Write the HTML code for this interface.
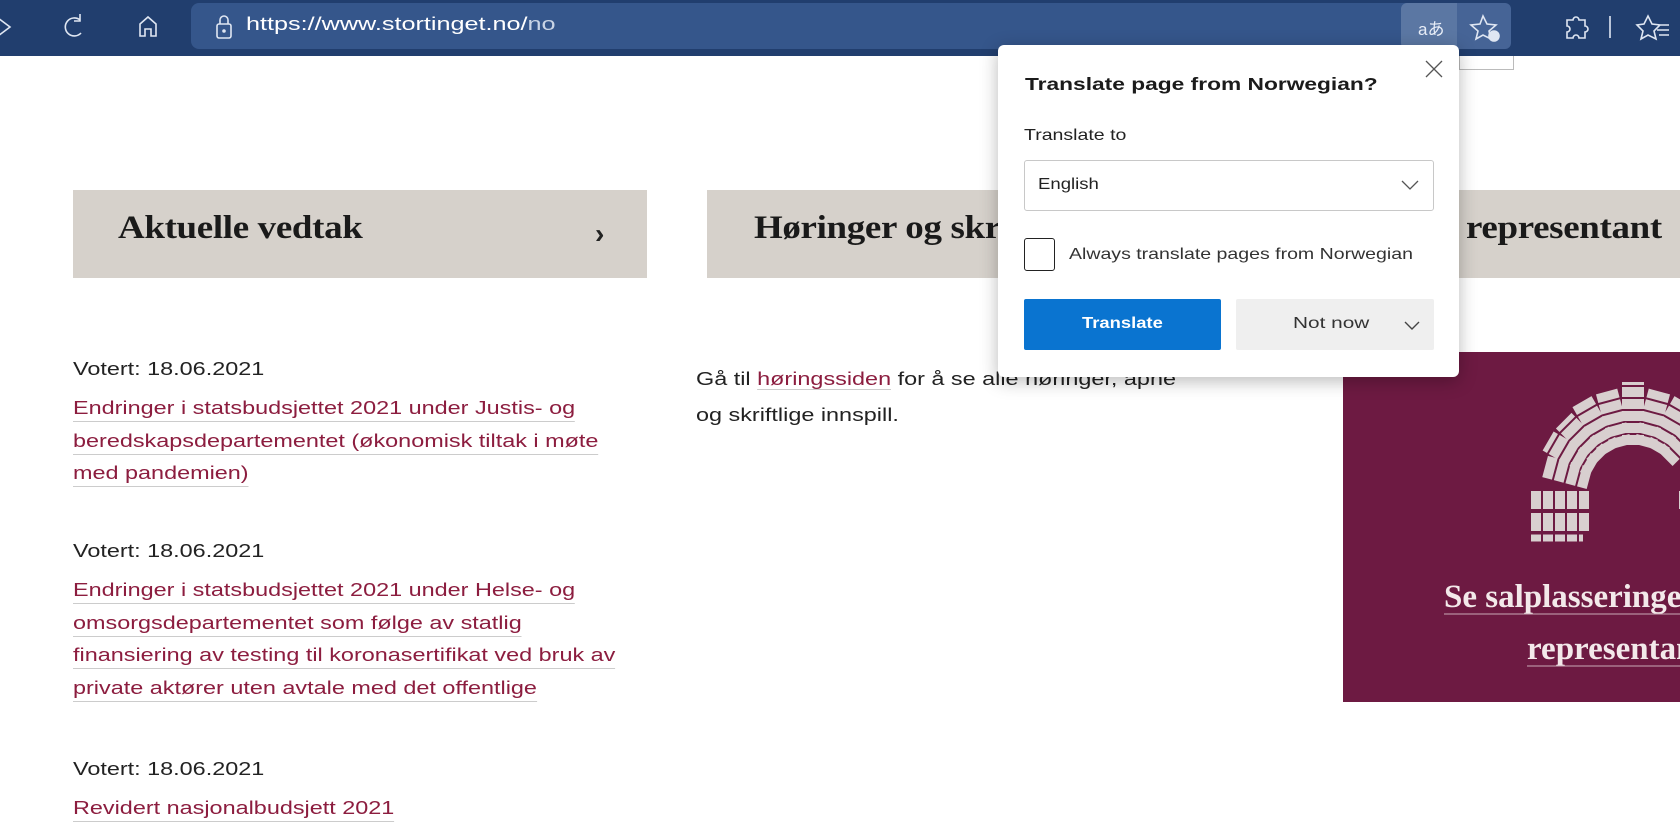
<!DOCTYPE html>
<html><head><meta charset="utf-8"><style>
*{margin:0;padding:0;box-sizing:border-box}
body{width:1680px;height:840px;overflow:hidden;background:#fff;font-family:"Liberation Sans",sans-serif;position:relative}
.abs{position:absolute}
.sx{transform-origin:0 0;white-space:nowrap}
.tb{left:0;top:0;width:1680px;height:56px;background:#213e6e}
.addr{left:191px;top:3px;width:1320px;height:46px;background:#35568b;border-radius:8px}
.url{left:246px;top:14px;font-size:18px;color:#fff;transform:scaleX(1.4)}
.url span{color:#c9d4e6}
.card{background:#d6d1cb;height:88px;top:190px}
.card h2{position:absolute;top:20px;font-family:"Liberation Serif",serif;font-weight:bold;font-size:33px;color:#1a1a1a;letter-spacing:-0.3px;white-space:nowrap;transform:scaleX(1.12);transform-origin:0 0}
.t{font-size:18px;color:#222;left:73px;transform:scaleX(1.3)}
.lk{font-size:18px;color:#8c1d3f;left:73px;line-height:32.7px;transform:scaleX(1.3)}
.lk span{border-bottom:1px solid #ccc;padding-bottom:3px}
.pop{left:998px;top:45px;width:461px;height:332px;background:#fff;border-radius:6px;box-shadow:0 4px 18px rgba(0,0,0,.28)}
.ps{transform:scaleX(1.22)}
</style></head><body>
<div class="abs tb"></div>
<div class="abs addr"></div>
<div class="abs" style="left:1401px;top:3px;width:56px;height:46px;background:#5b77a3;border-radius:6px 0 0 6px"></div>
<div class="abs" style="left:1457px;top:3px;width:54px;height:46px;background:#466496;border-radius:0 6px 6px 0"></div>
<svg class="abs" style="left:0;top:0" width="1680" height="56" fill="none" stroke="#dfe6f2" stroke-width="1.6">
<path d="M-2 18 L10 27 L-2 36"/>
<path d="M80 20 A9 9 0 1 0 81 33 M80 14 L80 21 L74 21"/>
<path d="M140 36 L140 24 L148 17 L156 24 L156 36 L151 36 L151 29 L145 29 L145 36 Z"/>
<rect x="217" y="24" width="14" height="14" rx="2"/><path d="M220 24 V20 A4 4 0 0 1 228 20 V24"/><circle cx="224" cy="31" r="1" fill="#dfe6f2"/>
<path d="M1483 16 L1487 24 L1496 25 L1489 31 L1491 39 L1483 35 L1476 39 L1478 31 L1471 25 L1480 24 Z"/>
<circle cx="1494" cy="36" r="5" fill="#dfe6f2"/>
<path d="M1567 20 h6 a3 3 0 0 1 6 0 h6 v6 a3 3 0 0 1 0 6 v6 h-6 a3 3 0 0 0 -6 0 h-6 v-6 a3 3 0 0 0 0 -6 z"/>
<path d="M1610 16 V38"/>
<path d="M1648 16 L1652 24 L1660 25 L1654 31 L1656 39 L1648 35 L1641 39 L1643 31 L1637 25 L1644 24 Z M1657 30 h12 M1659 35 h10 M1660 25 h9"/>
</svg>
<div class="abs" style="left:1418px;top:15px;font-size:17px;color:#e8eef8">aあ</div>
<div class="abs url sx">https://www.stortinget.no/<span>no</span></div>

<div class="abs card" style="left:73px;width:574px"><h2 style="left:45px">Aktuelle vedtak</h2><div class="abs" style="left:522px;top:28px;font-size:28px;font-weight:bold;color:#222">›</div></div>
<div class="abs card" style="left:707px;width:574px"><h2 style="left:47px">Høringer og skriftlige innspill</h2></div>
<div class="abs card" style="left:1343px;width:337px;overflow:visible"><h2 style="left:47px">Velg representant</h2></div>

<div class="abs t sx" style="top:359px">Votert: 18.06.2021</div>
<div class="abs lk sx" style="top:392px"><span>Endringer i statsbudsjettet 2021 under Justis- og</span><br><span>beredskapsdepartementet (økonomisk tiltak i møte</span><br><span>med pandemien)</span></div>
<div class="abs t sx" style="top:541px">Votert: 18.06.2021</div>
<div class="abs lk sx" style="top:574px"><span>Endringer i statsbudsjettet 2021 under Helse- og</span><br><span>omsorgsdepartementet som følge av statlig</span><br><span>finansiering av testing til koronasertifikat ved bruk av</span><br><span>private aktører uten avtale med det offentlige</span></div>
<div class="abs t sx" style="top:759px">Votert: 18.06.2021</div>
<div class="abs lk sx" style="top:792px"><span>Revidert nasjonalbudsjett 2021</span></div>

<div class="abs sx" style="left:696px;top:361px;font-size:18px;color:#222;line-height:36px;transform:scaleX(1.3)">Gå til <span style="color:#8c1d3f;border-bottom:1px solid #ccc">høringssiden</span> for å se alle høringer, åpne<br>og skriftlige innspill.</div>

<div class="abs" style="left:1343px;top:352px;width:337px;height:350px;background:#6d1a42"></div>
<svg class="abs" style="left:1343px;top:352px" width="337" height="350">
<g stroke="#d8cfcf" stroke-width="22" stroke-dasharray="10 2">
<g transform="rotate(0 290 138)"><line x1="290" y1="93" x2="290" y2="30"/></g>
<g transform="rotate(-15 290 138)"><line x1="290" y1="93" x2="290" y2="36"/></g>
<g transform="rotate(-30 290 138)"><line x1="290" y1="93" x2="290" y2="36"/></g>
<g transform="rotate(-45 290 138)"><line x1="290" y1="93" x2="290" y2="40"/></g>
<g transform="rotate(-60 290 138)"><line x1="290" y1="93" x2="290" y2="40"/></g>
<g transform="rotate(-75 290 138)"><line x1="290" y1="93" x2="290" y2="45"/></g>
<g transform="rotate(15 290 138)"><line x1="290" y1="93" x2="290" y2="36"/></g>
<g transform="rotate(30 290 138)"><line x1="290" y1="93" x2="290" y2="36"/></g>
<g transform="rotate(45 290 138)"><line x1="290" y1="93" x2="290" y2="40"/></g>
</g>
<g stroke="#d8cfcf" stroke-dasharray="10 2">
<line x1="188" y1="148" x2="246" y2="148" stroke-width="18"/>
<line x1="188" y1="170" x2="246" y2="170" stroke-width="18"/>
<line x1="188" y1="186" x2="240" y2="186" stroke-width="7"/>
<line x1="336" y1="148" x2="337" y2="148" stroke-width="18"/>
</g>
<text x="101" y="255" font-family="Liberation Serif,serif" font-weight="bold" font-size="33" fill="#f3e9ea">Se salplasseringen</text>
<line x1="101" y1="262" x2="337" y2="262" stroke="#c9a9b6"/>
<text x="184" y="307" font-family="Liberation Serif,serif" font-weight="bold" font-size="33" fill="#f3e9ea">representantene</text>
<line x1="184" y1="314" x2="337" y2="314" stroke="#c9a9b6"/>
</svg>

<div class="abs" style="left:1459px;top:56px;width:55px;height:14px;border:1px solid #bbb;border-top:none;background:#fff"></div>

<div class="abs pop">
<div class="abs sx" style="left:27px;top:29px;font-size:17.5px;font-weight:bold;color:#1b1b1b;transform:scaleX(1.3)">Translate page from Norwegian?</div>
<svg class="abs" style="left:426px;top:14px" width="20" height="20" stroke="#555" stroke-width="1.3"><path d="M2 2 L18 18 M18 2 L2 18"/></svg>
<div class="abs sx ps" style="left:26px;top:82px;font-size:16px;color:#222">Translate to</div>
<div class="abs" style="left:26px;top:115px;width:410px;height:51px;border:1px solid #c8c8c8;border-radius:3px"></div>
<div class="abs sx" style="left:40px;top:131px;font-size:16px;color:#222;transform:scaleX(1.16)">English</div>
<svg class="abs" style="left:402px;top:133px" width="20" height="14" fill="none" stroke="#555" stroke-width="1.3"><path d="M2 3 L10 11 L18 3"/></svg>
<div class="abs" style="left:26px;top:193px;width:31px;height:33px;border:1.5px solid #222;border-radius:3px"></div>
<div class="abs sx ps" style="left:71px;top:201px;font-size:16px;color:#333">Always translate pages from Norwegian</div>
<div class="abs" style="left:26px;top:254px;width:197px;height:51px;background:#0a74d0;border-radius:2px"></div>
<div class="abs sx" style="left:84px;top:270px;font-size:16px;font-weight:bold;color:#fff;transform:scaleX(1.15)">Translate</div>
<div class="abs" style="left:238px;top:254px;width:198px;height:51px;background:#efefef;border-radius:2px"></div>
<div class="abs sx" style="left:295px;top:270px;font-size:16px;color:#333;transform:scaleX(1.3)">Not now</div>
<svg class="abs" style="left:405px;top:275px" width="18" height="12" fill="none" stroke="#444" stroke-width="1.4"><path d="M2 2 L9 9 L16 2"/></svg>
</div>
</body></html>
